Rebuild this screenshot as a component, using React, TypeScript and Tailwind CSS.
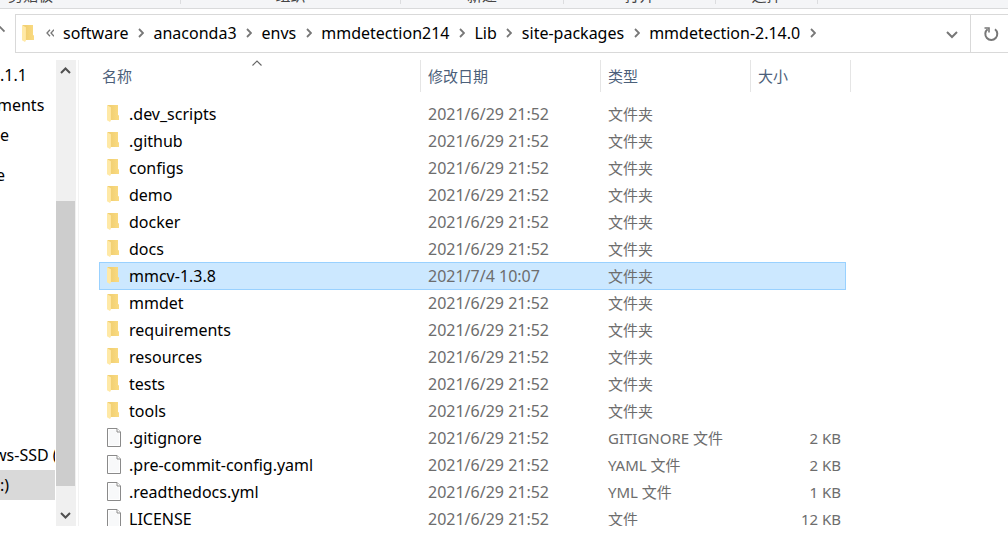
const groups = [
  { label: "剪贴板", size: "w-[181px] justify-start pl-2" },
  { label: "组织", size: "w-[220px] justify-center" },
  { label: "新建", size: "w-[163px] justify-center" },
  { label: "打开", size: "w-[152px] justify-center" },
  { label: "选择", size: "w-[102px] justify-center" },
];

const crumbs = [
  "software",
  "anaconda3",
  "envs",
  "mmdetection214",
  "Lib",
  "site-packages",
  "mmdetection-2.14.0",
];

type Entry = { name: string; date: string; type: string; size?: string };

const STAMP = "2021/6/29 21:52";
const folder = (name: string, date = STAMP): Entry => ({ name, date, type: "文件夹" });

const entries: Entry[] = [
  folder(".dev_scripts"),
  folder(".github"),
  folder("configs"),
  folder("demo"),
  folder("docker"),
  folder("docs"),
  folder("mmcv-1.3.8", "2021/7/4 10:07"),
  folder("mmdet"),
  folder("requirements"),
  folder("resources"),
  folder("tests"),
  folder("tools"),
  { name: ".gitignore", date: STAMP, type: "GITIGNORE 文件", size: "2 KB" },
  { name: ".pre-commit-config.yaml", date: STAMP, type: "YAML 文件", size: "2 KB" },
  { name: ".readthedocs.yml", date: STAMP, type: "YML 文件", size: "1 KB" },
  { name: "LICENSE", date: STAMP, type: "文件", size: "12 KB" },
];

const SELECTED = "mmcv-1.3.8";

function FolderIcon() {
  return (
    <svg width="12" height="17" viewBox="0 0 12 17" className="shrink-0" aria-hidden="true">
      <defs>
        <linearGradient id="fold" x1="0" x2="1" y1="0" y2="0">
          <stop offset="0.3" stopColor="#f2d073" />
          <stop offset="1" stopColor="#fadb82" />
        </linearGradient>
      </defs>
      <path d="M0.5 0H11V10L12 10.6V15H3V16L0.5 14Z" fill="url(#fold)" />
      <path d="M0 0.3L3.9 2.2V15.6L3 17L0 15.2Z" fill="#ffe9a6" />
    </svg>
  );
}

function FileIcon() {
  return (
    <svg width="14" height="19" viewBox="0 0 14 19" className="shrink-0" aria-hidden="true">
      <path d="M0.5 0.5H10L13.5 4V18.5H0.5Z" fill="#f8f9fa" stroke="#8a8a8a" />
      <path d="M1.5 1.5H9.5V4.5H12.5V17.5H1.5Z" fill="none" stroke="#ffffff" />
      <path d="M10 0.5V4H13.5" fill="#ffffff" stroke="#8a8a8a" />
    </svg>
  );
}

function Chevron({ d, w, h, className, stroke = 1.8 }: { d: string; w: number; h: number; className: string; stroke?: number }) {
  return (
    <svg width={w} height={h} viewBox={`0 0 ${w} ${h}`} fill="none" stroke="currentColor" strokeWidth={stroke} className={className} aria-hidden="true">
      <path d={d} />
    </svg>
  );
}

function Ribbon() {
  return (
    <div className="flex h-[9px] shrink-0 items-end overflow-hidden border-b border-[#d9dadb] bg-[#f4f5f7] text-[15px] text-[#444]">
      {groups.map((g) => (
        <div key={g.label} className={`mb-1 flex h-6 shrink-0 items-end border-r border-[#dcdddf] ${g.size}`}>
          <span className="leading-[18px]">{g.label}</span>
        </div>
      ))}
    </div>
  );
}

function AddressBar() {
  return (
    <div className="mt-[5px] flex h-[39px] shrink-0">
      <button aria-label="上移" className="flex w-[15px] items-center text-[#777]">
        <Chevron d="M-4 6L0 1L4.5 5.5" w={5} h={7} className="-mt-2" />
      </button>
      <nav aria-label="地址" className="flex min-w-0 flex-1 items-center border-y border-l border-[#d9d9d9] pb-px pl-[6px] pr-3">
        <FolderIcon />
        <button aria-label="更多" className="ml-3 mr-[9px] text-[#777]">
          <Chevron d="M4 0.8L1 4L4 7.2M8 0.8L5 4L8 7.2" w={8} h={8} stroke={1.3} className="" />
        </button>
        {crumbs.map((c) => (
          <span key={c} className="flex shrink-0 items-center pb-px">
            <a href="#" className="leading-6 text-black">{c}</a>
            <span className="flex w-[25px] justify-center text-[#777]">
              <Chevron d="M1 1L5 5L1 9" w={6} h={10} className="" />
            </span>
          </span>
        ))}
        <button aria-label="以前的位置" className="ml-auto text-[#777]">
          <Chevron d="M1 1L6 6L11 1" w={12} h={8} className="mt-1" stroke={2} />
        </button>
      </nav>
      <button aria-label="刷新" className="flex w-[38px] items-center border-y border-l border-[#d9d9d9] pl-3 text-[#777]">
        <svg width="16" height="16" viewBox="0 0 16 16" fill="none" stroke="currentColor" strokeWidth="1.8" aria-hidden="true">
          <path d="M12 3.2A6 6 0 1 1 4.6 3.2" strokeWidth="2" />
          <path d="M1.5 2H6V6.5" strokeWidth="1.6" />
        </svg>
      </button>
    </div>
  );
}

function Sidebar() {
  const item = "flex h-[30px] shrink-0 items-center whitespace-nowrap text-black";
  return (
    <div className="flex shrink-0">
      <nav aria-label="导航窗格" className="flex w-[55px] flex-col overflow-hidden">
        <a href="#" className={item}>.1.1</a>
        <a href="#" className={`${item} -ml-[3px]`}>ments</a>
        <a href="#" className={item}>e</a>
        <a href="#" className={`${item} mt-[10px] -ml-1`}>e</a>
        <div className="mt-[250px] shrink-0">
          <a href="#" className={`${item} -ml-[6px]`}>ws-SSD (</a>
          <a href="#" className={`${item} bg-[#d9d9d9]`}>:)</a>
        </div>
      </nav>
      <div className="ml-px flex w-5 flex-col bg-[#f0f0f0] text-[#505050]">
        <button aria-label="向上滚动" className="flex h-5 justify-center pt-[7px]">
          <Chevron d="M1 6L5.5 1.5L10 6" w={11} h={7} stroke={2} className="-ml-px" />
        </button>
        <div className="flex flex-1 flex-col">
          <div className="flex-[121]" />
          <div className="w-[19px] flex-[285] bg-[#cdcdcd]" />
          <div className="flex-[20]" />
        </div>
        <button aria-label="向下滚动" className="flex h-5 justify-center pt-[6px]">
          <Chevron d="M1 1L5.5 5.5L10 1" w={11} h={7} stroke={2} className="-ml-px" />
        </button>
      </div>
      <div className="ml-[2px] w-px bg-[#f2f2f2]" />
    </div>
  );
}

function FileTable() {
  const th = "border-l border-[#e5e5e5] pl-[7px] text-left font-normal";
  return (
    <div className="min-w-0 flex-1 overflow-hidden pl-5">
      <table className="w-[752px] table-fixed border-separate border-spacing-0">
        <colgroup>
          <col className="w-[321px]" />
          <col className="w-[180px]" />
          <col className="w-[150px]" />
          <col className="w-[96px]" />
          <col className="w-[5px]" />
        </colgroup>
        <thead className="text-[15px] text-[#4c607a]">
          <tr className="h-8">
            <th className="relative pl-[3px] text-left font-normal">
              <button>名称</button>
              <Chevron d="M0.5 5.5L5 1L9.5 5.5" w={10} h={6} stroke={1.1} className="absolute left-[153px] top-0 text-[#666]" />
            </th>
            <th className={th}><button>修改日期</button></th>
            <th className={th}><button>类型</button></th>
            <th className={th}><button>大小</button></th>
            <td className="border-r border-[#e5e5e5]" />
          </tr>
        </thead>
        <tbody className="text-[#6d6d6d]">
          <tr className="h-[9px]"><td colSpan={5} /></tr>
          {entries.map((e) => {
            const on = e.name === SELECTED;
            const mid = on
              ? "bg-[#cce8ff] shadow-[0_-1px_#99d1ff,inset_0_-1px_#99d1ff]"
              : "";
            const first = on
              ? "bg-[#cce8ff] shadow-[0_-1px_#99d1ff,inset_1px_-1px_#99d1ff]"
              : "";
            const last = on
              ? "bg-[#cce8ff] shadow-[0_-1px_#99d1ff,inset_-1px_-1px_#99d1ff]"
              : "";
            return (
              <tr key={e.name} aria-selected={on} className="h-[27px] whitespace-nowrap leading-6">
                <td className={`p-0 ${first}`}>
                  <div className="flex h-[27px] items-center pb-[2px] pl-2 text-black">
                    <span className="flex w-[22px]">
                      {e.size ? <FileIcon /> : <FolderIcon />}
                    </span>
                    {e.name}
                  </div>
                </td>
                <td className={`p-0 pb-[2px] pl-2 ${mid}`}>{e.date}</td>
                <td className={`p-0 pb-[2px] pl-2 text-[15px] ${mid}`}>{e.type}</td>
                <td className={`p-0 pb-[2px] pr-[5px] text-right text-[15px] ${last}`}>{e.size}</td>
                <td />
              </tr>
            );
          })}
        </tbody>
      </table>
    </div>
  );
}

export default function App() {
  return (
    <div className="flex h-screen flex-col overflow-hidden bg-white pb-2 font-['Noto_Sans','Noto_Sans_CJK_SC',sans-serif] text-[16px]">
      <Ribbon />
      <AddressBar />
      <main className="mt-[7px] flex min-h-0 flex-1 overflow-hidden">
        <Sidebar />
        <FileTable />
      </main>
    </div>
  );
}
